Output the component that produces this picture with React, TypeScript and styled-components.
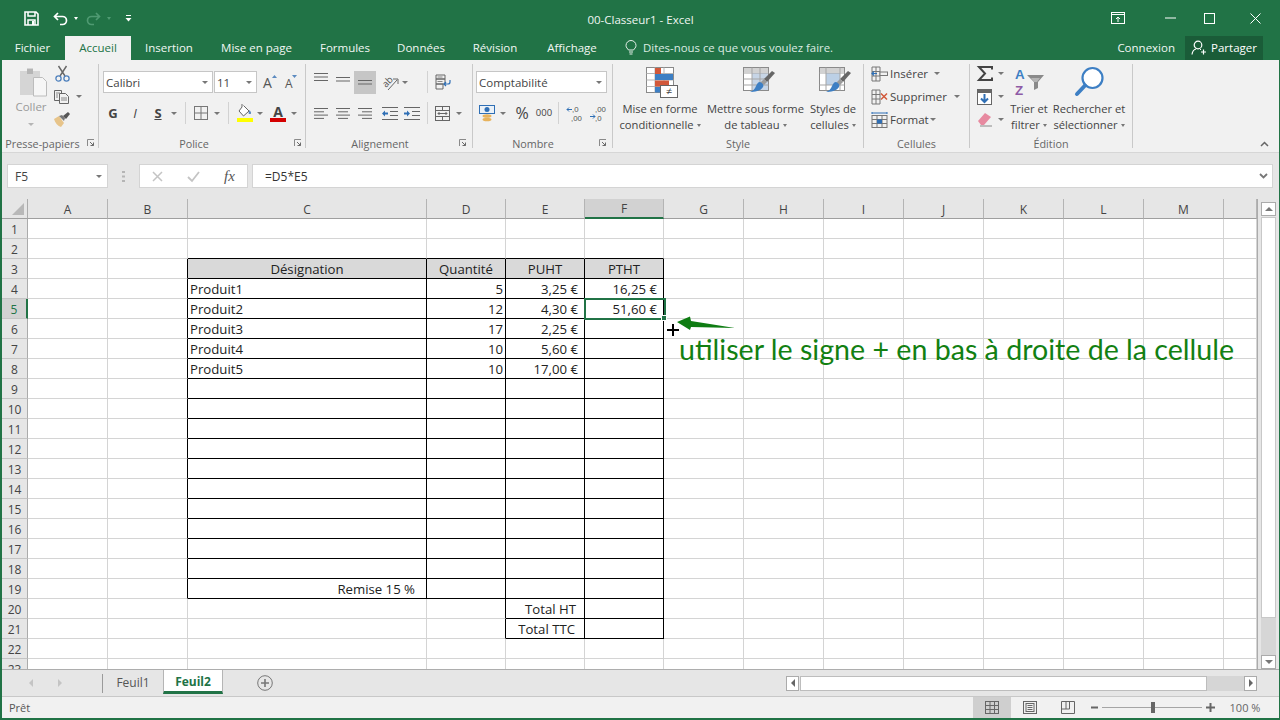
import React from 'react';
import styled, { createGlobalStyle } from 'styled-components';

const UI = `"Open Sans", "Noto Sans", "Liberation Sans", sans-serif`;
const GREEN = '#217346';

const Global = createGlobalStyle`
  html, body { margin: 0; padding: 0; overflow: hidden; background: ${GREEN}; }
  * { box-sizing: border-box; }
  svg { display: block; flex: none; overflow: visible; }
`;

const Window = styled.div`
  width: 1280px; height: 720px; padding: 0 1px 2px 2px; background: ${GREEN};
  display: flex; flex-direction: column; font-family: ${UI}; overflow: hidden;
`;

/* ---------- title bar ---------- */
const TitleBar = styled.div`
  height: 36px; display: flex; align-items: center; position: relative; color: #fff; padding-left: 22px;
`;
const Slot = styled.span<{ $w: number; $ml?: number }>`
  width: ${p => p.$w}px; margin-left: ${p => p.$ml ?? 0}px; flex: none;
  display: flex; align-items: center; justify-content: center;
`;
const WindowTitle = styled.div`
  position: absolute; left: 0; right: 0; top: 11px; text-align: center; font-size: 11.5px; line-height: 17px; color: #f0f6f2; pointer-events: none;
`;
const Spacer = styled.div`flex: 1;`;
const WinCaret = styled.span<{ $dim?: boolean }>`
  width: 0; height: 0; border-left: 2.5px solid transparent; border-right: 2.5px solid transparent;
  border-top: 3px solid ${p => (p.$dim ? '#4f9a72' : '#fff')};
`;

/* ---------- tabs ---------- */
const TabBar = styled.div`height: 24px; display: flex; align-items: stretch; color: #fff;`;
const Tab = styled.div<{ $w: number; $active?: boolean }>`
  width: ${p => p.$w}px; flex: none; display: flex; align-items: center; justify-content: center; padding-bottom: 2px;
  font-size: 11.5px; background: ${p => (p.$active ? '#f1f1f1' : 'transparent')}; color: ${p => (p.$active ? GREEN : '#f2f7f4')};
  &:first-child { padding-right: 2px; }
`;
const TellMe = styled.div`
  margin-left: 13px; display: flex; align-items: center; gap: 6px; padding-bottom: 2px; font-size: 11.4px; color: #dcebe3;
`;
const Connexion = styled.div`
  font-size: 11.5px; display: flex; align-items: center; margin-right: 10px; padding-bottom: 2px; color: #f2f7f4;
`;
const Share = styled.div`
  width: 78px; margin-right: 16px; background: #1a5c38; display: flex; align-items: center; justify-content: center; gap: 4px; padding-bottom: 2px; font-size: 11.5px;
`;

/* ---------- ribbon ---------- */
const Ribbon = styled.div`
  height: 93px; background: #f1f1f1; border-bottom: 1px solid #d6d6d6; display: flex; color: #444; position: relative;
`;
const Group = styled.section<{ $w: number }>`
  width: ${p => p.$w}px; flex: none; display: flex; flex-direction: column;
`;
const GroupBody = styled.div<{ $pl?: number }>`
  height: 76px; display: flex; padding-left: ${p => p.$pl ?? 0}px;
`;
const GroupFoot = styled.div`height: 16px; display: flex; align-items: center; padding-bottom: 2px;`;
const GroupLabel = styled.div<{ $w?: number }>`
  width: ${p => (p.$w ? `${p.$w}px` : '100%')}; text-align: center; font-size: 10.8px; color: #666; white-space: nowrap;
`;
const GroupRule = styled.div`width: 1px; flex: none; margin: 4px 0 4px; background: #c9c9c9;`;
const Launcher = styled.span<{ $ml: number }>`margin-left: ${p => p.$ml}px; display: block;`;
const Collapse = styled.div`position: absolute; right: 10px; bottom: 5px;`;

const TwoRows = styled.div`display: flex; flex-direction: column; padding-top: 11px; gap: 9px;`;
const IconRow = styled.div<{ $pl?: number }>`height: 22px; display: flex; align-items: center; padding-left: ${p => p.$pl ?? 0}px;`;
const Stack = styled.div<{ $w?: number; $ml?: number }>`
  display: flex; flex-direction: column; padding-top: 2px; margin-left: ${p => p.$ml ?? 0}px; ${p => (p.$w ? `width:${p.$w}px;` : '')} flex: none;
`;
const StackRow = styled.div`height: 23px; display: flex; align-items: center;`;
const StackText = styled.span<{ $ml?: number; $w?: number }>`
  font-size: 11.5px; color: #444; margin-left: ${p => p.$ml ?? 0}px; white-space: nowrap; ${p => (p.$w ? `width:${p.$w}px;` : '')}
`;

const Caret = styled.span<{ $light?: boolean }>`
  display: inline-block; width: 0; height: 0; flex: none;
  border-left: 3px solid transparent; border-right: 3px solid transparent; border-top: 3px solid ${p => (p.$light ? '#b5b5b5' : '#777')};
`;
const TinyCaret = styled(Caret)`margin-left: 3px; vertical-align: 2px; border-left-width: 2.5px; border-right-width: 2.5px;`;

const VRule = styled.span<{ $ml: number; $h?: number }>`
  width: 1px; height: ${p => p.$h ?? 22}px; margin-left: ${p => p.$ml}px; background: #d2d2d2; flex: none;
`;
const Combo = styled.div<{ $w: number; $ml?: number }>`
  width: ${p => p.$w}px; height: 22px; margin-left: ${p => p.$ml ?? 0}px; flex: none; background: #fff; border: 1px solid #c6c6c6;
  display: flex; align-items: center; justify-content: space-between; padding: 0 4px 0 2px; font-size: 11.5px; color: #444;
`;
const StyleLetter = styled.span<{ $b?: boolean; $i?: boolean; $u?: boolean }>`
  font-family: ${UI}; font-size: 13px; color: #444;
  font-weight: ${p => (p.$i ? 400 : 700)}; font-style: ${p => (p.$i ? 'italic' : 'normal')};
  text-decoration: ${p => (p.$u ? 'underline' : 'none')};
`;
const Active = styled.span`
  width: 22px; height: 23px; margin-left: 4px; background: #c6c6c6; flex: none; display: flex; align-items: center; justify-content: center;
`;
const NumText = styled.span<{ $big?: boolean }>`
  font-size: ${p => (p.$big ? 16 : 9.5)}px; color: #444; line-height: 1;
`;

const Coller = styled.div`
  width: 34px; margin-left: 12px; padding-top: 7px; display: flex; flex-direction: column; align-items: center; flex: none;
`;
const PasteBox = styled.div`margin-left: 6px;`;
const MutedLabel = styled.div`font-size: 11.5px; color: #9a9a9a; line-height: 16px; margin-top: 2px;`;
const MutedCaret = styled.div`margin-top: 8px; display: flex;`;

const BigButton = styled.div<{ $w: number }>`
  width: ${p => p.$w}px; flex: none; display: flex; flex-direction: column; align-items: center; padding-top: 7px;
`;
const BigIcon = styled.div<{ $ml?: number }>`height: 34px; display: flex; justify-content: center; margin-left: ${p => p.$ml ?? 0}px;`;
const BigText = styled.div`font-size: 11.2px; line-height: 16px; color: #444; white-space: nowrap;`;
const SortBox = styled.div`width: 30px; height: 31px; display: flex; align-items: center;`;
const SortLetters = styled.div`width: 12px; margin-left: 1px; flex: none; display: flex; flex-direction: column;`;
const SortLetter = styled.span<{ $c: string }>`
  display: block; height: 15.5px; line-height: 15.5px; font-family: "Liberation Sans", sans-serif; font-size: 13.4px; font-weight: 700; color: ${p => p.$c};
`;

/* ---------- formula bar ---------- */
const FormulaBar = styled.div`
  height: 46px; background: #e6e6e6; display: flex; padding: 11px 6px 11px 5px; align-items: stretch;
`;
const NameBox = styled.div`
  width: 101px; background: #fff; border: 1px solid #d4d4d4; display: flex; align-items: center; justify-content: space-between;
  padding: 0 5px 0 7px; font-size: 12px; color: #444;
`;
const Grip = styled.div`width: 31px; display: flex; align-items: center; justify-content: center;`;
const FxBox = styled.div`
  width: 109px; background: #fff; border: 1px solid #d4d4d4; display: flex; align-items: center; padding-left: 12px;
`;
const FormulaInput = styled.div`
  flex: 1; margin-left: 4px; background: #fff; border: 1px solid #d4d4d4; display: flex; align-items: center; justify-content: space-between;
  padding: 0 4px 0 12px; font-size: 12px; color: #333;
`;
const FxMark = styled.span`
  font-family: "Liberation Serif", serif; font-style: italic; font-size: 15px; color: #555; margin-left: 24px;
`;

/* ---------- sheet ---------- */
const SheetArea = styled.div`height: 470px; display: flex; background: #e6e6e6;`;
const Sheet = styled.div`
  position: relative; width: 1256px; height: 470px; overflow: hidden; background: #fff; border-right: 1px solid #ababab;
  display: grid; grid-template-columns: 26px 80px 80px 239px 79px 79px 79px 80px 80px 80px 80px 80px 80px 80px 33px; grid-auto-rows: 20px;
`;
const Corner = styled.div`
  background: #e6e6e6; border-right: 1px solid #ababab; border-bottom: 1px solid #9f9f9f; display: flex; align-items: flex-end; justify-content: flex-end; padding: 0 3px 3px 0;
`;
const ColHead = styled.div<{ $on?: boolean }>`
  background: ${p => (p.$on ? '#d2d2d2' : '#e6e6e6')}; border-right: 1px solid #b4b4b4;
  border-bottom: ${p => (p.$on ? `2px solid ${GREEN}` : '1px solid #9f9f9f')};
  display: flex; align-items: center; justify-content: center; padding-top: 1px; font-size: 12px; color: #444;
`;
const RowHead = styled.div<{ $on?: boolean }>`
  background: ${p => (p.$on ? '#d2d2d2' : '#e6e6e6')};
  color: ${p => (p.$on ? GREEN : '#444')};
  border-right: ${p => (p.$on ? `2px solid ${GREEN}` : '1px solid #ababab')}; border-bottom: 1px solid #c4c4c4;
  display: flex; align-items: center; justify-content: center; font-size: 12px; padding-top: 1px;
`;
const Cell = styled.div<{ $right: boolean; $bottom: boolean; $fill?: boolean; $align: string; $pr: number }>`
  background: ${p => (p.$fill ? '#d9d9d9' : '#fff')};
  border-right: 1px solid ${p => (p.$right ? '#000' : '#d4d4d4')};
  border-bottom: 1px solid ${p => (p.$bottom ? '#000' : '#d4d4d4')};
  display: flex; align-items: center; justify-content: ${p => p.$align}; padding: 1px ${p => p.$pr}px 0 2px;
  font-size: 13.2px; color: #222; white-space: nowrap;
`;
const Selection = styled.div`
  position: absolute; left: 582px; top: 99px; width: 82px; height: 22px; border: 2px solid ${GREEN}; pointer-events: none;
`;
const Handle = styled.div`
  position: absolute; right: -3px; bottom: -3px; width: 6px; height: 6px; background: ${GREEN}; border: 1px solid #fff;
`;
const Note = styled.div`
  position: absolute; left: 677px; top: 132px; font-family: Lato, "Open Sans", sans-serif; font-size: 28.6px; line-height: 36px; color: #128012; white-space: nowrap;
`;
const ArrowMark = styled.div`position: absolute; left: 662px; top: 117px;`;

const VScroll = styled.div`width: 21px; padding: 3px 3px 0 3px; display: flex; flex-direction: column; align-items: stretch;`;
const ScrollBtn = styled.div`
  height: 14px; background: #fff; border: 1px solid #ababab; display: flex; align-items: center; justify-content: center; flex: none;
`;
const VThumb = styled.div`height: 402px; margin-top: 1px; background: #fff; border: 1px solid #c8c8c8;`;
const VTrack = styled.div`height: 37px; background: #d6d6d6;`;

/* ---------- sheet tabs ---------- */
const TabsRow = styled.div`
  height: 28px; background: #e6e6e6; border-top: 1px solid #adadad; border-bottom: 1px solid #c8c8c8; display: flex; align-items: center; position: relative;
`;
const NavTriangle = styled.span<{ $dir: 'l' | 'r'; $ml: number }>`
  width: 0; height: 0; flex: none; margin-left: ${p => p.$ml}px;
  border-top: 4px solid transparent; border-bottom: 4px solid transparent;
  ${p => (p.$dir === 'l' ? 'border-right: 4px solid #c4c4c4;' : 'border-left: 4px solid #c4c4c4;')}
`;
const TabRule = styled.span`width: 1px; height: 19px; margin-left: 40px; background: #9a9a9a; flex: none;`;
const SheetTab = styled.div<{ $on?: boolean }>`
  width: 60px; flex: none; align-self: flex-start; height: 24px; display: flex; align-items: center; justify-content: center; font-size: 12px;
  ${p =>
    p.$on
      ? `background:#fff;color:${GREEN};font-weight:700;padding-top:1px;border-bottom:3px solid ${GREEN};border-left:1px solid #b5b5b5;border-right:1px solid #b5b5b5;`
      : 'color:#555;'}
`;
const AddSheet = styled.span`margin-left: 34px; flex: none;`;
const HScroll = styled.div`margin-left: auto; display: flex; align-items: center; height: 15px; margin-right: 22px; width: 471px;`;
const HBtn = styled.div`
  width: 13px; height: 15px; background: #fff; border: 1px solid #ababab; display: flex; align-items: center; justify-content: center; flex: none;
`;
const HThumb = styled.div`width: 407px; height: 15px; margin-left: 1px; background: #fff; border: 1px solid #bdbdbd; flex: none;`;
const HTrack = styled.div`flex: 1; height: 15px; background: #d6d6d6;`;
const BtnTriangle = styled.span<{ $dir: 'l' | 'r' }>`
  width: 0; height: 0; border-top: 4px solid transparent; border-bottom: 4px solid transparent;
  ${p => (p.$dir === 'l' ? 'border-right: 4px solid #666;' : 'border-left: 4px solid #666;')}
`;
const UpDown = styled.span<{ $up?: boolean }>`
  width: 0; height: 0; border-left: 4px solid transparent; border-right: 4px solid transparent;
  ${p => (p.$up ? 'border-bottom: 4px solid #777;' : 'border-top: 4px solid #777;')}
`;

/* ---------- status ---------- */
const StatusBar = styled.div`height: 21px; background: #f1f1f1; display: flex; align-items: center; padding-left: 7px; font-size: 11px; color: #555;`;
const ViewBtn = styled.div<{ $on?: boolean }>`
  width: 38px; height: 21px; flex: none; display: flex; align-items: center; justify-content: center; background: ${p => (p.$on ? '#cfcfcf' : 'transparent')};
`;
const ZoomSlider = styled.div`
  width: 100px; height: 1px; background: #a5a5a5; margin-left: 4px; position: relative; flex: none;
`;
const ZoomThumb = styled.div`position: absolute; left: 49px; top: -5px; width: 4px; height: 11px; background: #666;`;
const ZoomPct = styled.div`width: 48px; margin: 0 10px 0 6px; font-size: 11px; color: #666; flex: none; text-align: center;`;

/* ---------- icons ---------- */
const SaveIcon = () => (
  <svg width="15" height="15" viewBox="0 0 15 15"><path d="M1 1h11l2 2v11H1z" fill="none" stroke="#fff" strokeWidth="1.6" /><path d="M4 1v4h7V1M4 14V9h7v5" fill="none" stroke="#fff" strokeWidth="1.5" /><rect x="8" y="10" width="2" height="4" fill="#fff" /></svg>
);
const UndoIcon = ({ dim }: { dim?: boolean }) => (
  <svg width="15" height="13" viewBox="0 0 15 13" style={dim ? { transform: 'scaleX(-1)' } : undefined}>
    <path d="M5 1 1.5 4.5 5 8M2 4.5h7.5a4 4 0 0 1 0 8H7" fill="none" stroke={dim ? '#4f9a72' : '#fff'} strokeWidth="1.7" />
  </svg>
);
const QatIcon = () => (
  <svg width="7" height="7" viewBox="0 0 7 7"><path d="M1 0.5h5" stroke="#fff" strokeWidth="1" /><path d="M0.5 3h6L3.5 6.5z" fill="#fff" /></svg>
);
const RibbonOptIcon = () => (
  <svg width="14" height="12" viewBox="0 0 14 12"><rect x=".5" y=".5" width="13" height="11" fill="none" stroke="#fff" /><path d="M.5 2.5h13" stroke="#fff" /><path d="M7 10V5M5 7l2-2 2 2" fill="none" stroke="#fff" /></svg>
);
const MinIcon = () => <svg width="11" height="2" viewBox="0 0 11 2"><path d="M0 1h11" stroke="#fff" /></svg>;
const MaxIcon = () => <svg width="11" height="11" viewBox="0 0 11 11"><rect x=".5" y=".5" width="10" height="10" fill="none" stroke="#fff" /></svg>;
const CloseIcon = () => <svg width="11" height="11" viewBox="0 0 11 11"><path d="M.5.5l10 10M10.5.5l-10 10" stroke="#fff" /></svg>;
const BulbIcon = () => (
  <svg width="12" height="15" viewBox="0 0 12 15"><path d="M3.5 10C2.5 8.5 1 7.6 1 5.5a5 5 0 0 1 10 0C11 7.6 9.5 8.5 8.5 10z" fill="none" stroke="#e6f0ea" /><path d="M4 12h4M4.5 14h3" stroke="#e6f0ea" /></svg>
);
const PersonIcon = () => (
  <svg width="16" height="15" viewBox="0 0 16 15"><circle cx="7" cy="5" r="3.8" fill="none" stroke="#fff" strokeWidth="1.2" /><path d="M1 14.5c.4-3 2-5 4-5.5M9 9.5h1" fill="none" stroke="#fff" strokeWidth="1.2" /><path d="M12.5 9.5v5M10 12h5" stroke="#fff" strokeWidth="1.2" /></svg>
);
const LaunchIcon = () => (
  <svg width="8" height="8" viewBox="0 0 8 8"><path d="M.5 7V.5H7" fill="none" stroke="#8a8a8a" /><path d="M3 3l3.5 3.5M6.5 3.5v3h-3" fill="none" stroke="#6a6a6a" /></svg>
);
const ChevUp = () => <svg width="9" height="6" viewBox="0 0 9 6"><path d="M1 5l3.5-3.5L8 5" fill="none" stroke="#666" strokeWidth="1.5" /></svg>;
const ChevDown = () => <svg width="9" height="6" viewBox="0 0 9 6"><path d="M1 1l3.5 3.5L8 1" fill="none" stroke="#777" strokeWidth="1.8" /></svg>;

const PasteIcon = () => (
  <svg width="28" height="30" viewBox="0 0 28 30">
    <path d="M0 4h7V1h6v3h7v24H0z" fill="#d5d5d5" />
    <rect x="7" y="2" width="6" height="5" fill="#b5b5b5" />
    <path d="M13.5 10.5h9l4 4v14.5h-13z" fill="#f6f6f6" stroke="#bcbcbc" />
  </svg>
);
const ScissorsIcon = () => (
  <svg width="15" height="16" viewBox="0 0 15 16">
    <path d="M3.5 0l6.5 10M11.5 0L5 10" stroke="#666" strokeWidth="1.4" fill="none" />
    <circle cx="3.5" cy="12.5" r="2.6" fill="none" stroke="#4f81bd" strokeWidth="1.3" />
    <circle cx="11.5" cy="12.5" r="2.6" fill="none" stroke="#4f81bd" strokeWidth="1.3" />
  </svg>
);
const CopyIcon = () => (
  <svg width="15" height="14" viewBox="0 0 15 14" fill="none" stroke="#666">
    <path d="M.5.5h7v10h-7z" /><path d="M5.5 3.5h6l3 3v7h-9z" fill="#f1f1f1" />
    <path d="M2 3h4M2 5h2M2 7h2M7 8h6M7 10h6" stroke="#888" />
  </svg>
);
const BrushIcon = () => (
  <svg width="16" height="15" viewBox="0 0 16 15">
    <path d="M0 7l5-3 5 7-3 4C4 14 1 11 0 7z" fill="#e7c48a" />
    <path d="M5 4l3-1 3 3-1 3z" fill="#777" />
    <path d="M9 4l5-4 2 2-4 5z" fill="#555" />
  </svg>
);
const GrowA = ({ up }: { up?: boolean }) => (
  <svg width={up ? 15 : 13} height="14" viewBox={up ? '0 0 15 14' : '0 0 13 14'}>
    <text x="0" y="13" fontFamily={UI} fontSize={up ? 14 : 12} fill="#555">A</text>
    <path d={up ? 'M9 3l2.5-3L14 3z' : 'M7 0h5L9.5 3z'} fill="#5b8ac0" />
  </svg>
);
const BordersIcon = () => (
  <svg width="14" height="14" viewBox="0 0 14 14" fill="none" stroke="#777"><rect x=".5" y=".5" width="13" height="13" /><path d="M7 .5v13M.5 7h13" /></svg>
);
const FillIcon = () => (
  <svg width="16" height="18" viewBox="0 0 16 18">
    <path d="M5 0v3L2 7l4.5 5L12 7 6.5 1.5" fill="#fff" stroke="#666" />
    <path d="M12.5 6c1 1.5 2 2.5 1.5 3.5s-2.5.5-2.500-.5z" fill="#5b8ac0" />
    <rect x="0" y="14" width="16" height="4" fill="#ffff00" />
  </svg>
);
const FontColorIcon = () => (
  <svg width="16" height="18" viewBox="0 0 16 18">
    <text x="8" y="12.5" textAnchor="middle" fontFamily={UI} fontWeight="700" fontSize="14" fill="#444">A</text>
    <rect x="0" y="14" width="16" height="4" fill="#d40000" />
  </svg>
);
const Lines = ({ kind }: { kind: 'l' | 'c' | 'r' }) => {
  const x = (w: number) => (kind === 'l' ? 0 : kind === 'c' ? (14 - w) / 2 : 14 - w);
  const ws = [14, 10, 14, 10];
  return (
    <svg width="14" height="11" viewBox="0 0 14 11">
      {ws.map((w, i) => <rect key={i} x={x(w)} y={i * 3.3} width={w} height="1" fill="#666" />)}
    </svg>
  );
};
const VAlign = ({ n, y }: { n: number; y: number }) => (
  <svg width="14" height="14" viewBox="0 0 14 14" style={{ transform: `translateY(${y}px)` }}>
    {Array.from({ length: n }).map((_, i) => <rect key={i} x="0" y={i * 3.5} width="14" height="1" fill="#666" />)}
  </svg>
);
const OrientIcon = () => (
  <svg width="16" height="17" viewBox="0 0 16 17">
    <text x="0" y="11" fontFamily={UI} fontSize="9.5" fill="#555" transform="rotate(-45 5 9)">ab</text>
    <path d="M5 16L14 6M10 5h5v5" fill="none" stroke="#666" />
  </svg>
);
const IndentIcon = ({ out }: { out?: boolean }) => (
  <svg width="16" height="13" viewBox="0 0 16 13">
    {[0, 12].map(y => <rect key={y} x="0" y={y} width="16" height="1" fill="#666" />)}
    {[4, 8].map(y => <rect key={y} x="8" y={y} width="8" height="1" fill="#666" />)}
    <path d={out ? 'M0 6.5l3-3v2h3v2H3v2z' : 'M6 6.5l-3-3v2H0v2h3v2z'} fill="#2f6fb5" />
  </svg>
);
const WrapIcon = () => (
  <svg width="16" height="16" viewBox="0 0 16 16" fill="none" stroke="#666">
    <path d="M1 1h9v4H1zM1 5h9v5H1zM1 10h7v5H1z" />
    <path d="M2.5 3h5M2.5 7.5h5" stroke="#888" />
    <path d="M15 6v2a2 2 0 0 1-2 2H9M11 8l-2 2 2 2" stroke="#2f6fb5" strokeWidth="1.2" />
  </svg>
);
const MergeIcon = () => (
  <svg width="15" height="15" viewBox="0 0 15 15" fill="none" stroke="#666">
    <rect x=".5" y=".5" width="14" height="14" /><path d="M.5 4.5h14M.5 10.5h14M7.5.5v4M7.5 10.5v4" />
    <path d="M3 7.5h9M4.5 6L3 7.5 4.5 9M10.5 6L12 7.5 10.5 9" />
  </svg>
);
const MoneyIcon = () => (
  <svg width="16" height="17" viewBox="0 0 16 17">
    <rect x=".5" y=".5" width="15" height="8" fill="#eaf1f8" stroke="#2f6fb5" />
    <circle cx="8" cy="4.5" r="2.5" fill="#2f6fb5" />
    <ellipse cx="8" cy="11" rx="4.5" ry="1.8" fill="#e8b35c" />
    <ellipse cx="8" cy="14.5" rx="4.5" ry="1.8" fill="#e8b35c" />
  </svg>
);
const DecIcon = ({ inc }: { inc?: boolean }) => (
  <svg width="15" height="15" viewBox="0 0 15 15">
    <text x="5" y="6" fontFamily={'"Liberation Sans", sans-serif'} fontSize="7.8" fill="#555">{inc ? ',00' : ',0'}</text>
    <text x={inc ? 5 : 4} y="15" fontFamily={'"Liberation Sans", sans-serif'} fontSize="7.8" fill="#555">{inc ? ',0' : ',00'}</text>
    <path d={inc ? 'M0 10.5h5M3 8.5l2 2-2 2' : 'M5 3.5H0M2 1.5l-2 2 2 2'} fill="none" stroke="#2f6fb5" />
  </svg>
);
const CondFmtIcon = () => (
  <svg width="32" height="31" viewBox="0 0 32 31">
    <rect x=".5" y=".5" width="27" height="25" fill="#fff" stroke="#8a8a8a" />
    <path d="M9 .5v25M18 .5v25M.5 6.5h27M.5 13h27M.5 19.5h27" stroke="#b5b5b5" />
    <rect x="9" y="1" width="6" height="6" fill="#d2583a" />
    <rect x="9" y="7" width="18" height="6" fill="#3d7fc4" />
    <rect x="9" y="13.5" width="14" height="6" fill="#d2583a" />
    <rect x="9" y="20" width="6" height="5.5" fill="#3d7fc4" />
    <rect x="14.5" y="18.5" width="17" height="12" fill="#fff" stroke="#666" />
    <text x="23" y="28" textAnchor="middle" fontFamily={UI} fontSize="11" fill="#444">≠</text>
  </svg>
);
const TableStyleIcon = ({ block }: { block?: boolean }) => (
  <svg width="33" height="31" viewBox="0 0 33 31">
    <rect x=".5" y=".5" width="25" height="23" fill="#fff" stroke="#8a8a8a" />
    <rect x="1" y="1" width="24" height="4" fill="#d2d2d2" />
    {block ? <rect x="7" y="6" width="14" height="12" fill="#bcd0e6" /> : <rect x="9" y="6" width="16" height="17" fill="#c7d5e6" />}
    {!block && <path d="M9 .5v23M17 .5v23M.5 6h25M.5 12h25M.5 18h25" stroke="#a5a5a5" />}
    {block && <path d="M7 .5v23M.5 6h25M.5 18h25M21 .5v23" stroke="#a5a5a5" />}
    <path d="M32 6l-8 9-3-3 8-8z" fill="#666" />
    <path d="M21 12l3 3-3 3-4-2z" fill="#9a9a9a" />
    <path d="M17 15c3 1 4 3 3 5-2 4-9 5-13 5 3-1 5-3 6-6 1-2 2-4 4-4z" fill="#3d7fc4" />
  </svg>
);
const InsertIcon = () => (
  <svg width="17" height="16" viewBox="0 0 17 16" fill="none" stroke="#777">
    <path d="M1 1h8v14H1zM1 5.5h8M1 10h8M5 1v14" /><rect x="9" y="6" width="7.5" height="3.5" fill="#f1f1f1" />
    <path d="M6 7.5H1M3 5.5l-2 2 2 2" stroke="#2f6fb5" strokeWidth="1.2" />
  </svg>
);
const DeleteIcon = () => (
  <svg width="17" height="16" viewBox="0 0 17 16" fill="none" stroke="#777">
    <path d="M1 1h8v14H1zM1 5.5h8M1 10h8M5 1v14" />
    <path d="M10 4.5l6 6M16 4.5l-6 6" stroke="#d2583a" strokeWidth="1.5" />
  </svg>
);
const FormatIcon = () => (
  <svg width="17" height="16" viewBox="0 0 17 16" fill="none" stroke="#777">
    <path d="M1 0v2M16 0v2M1 1h15" stroke="#2f6fb5" />
    <rect x="1" y="3.5" width="15" height="12" /><path d="M1 7.5h15M1 11.5h15M6 3.5v12M11 3.5v12" />
    <rect x="6" y="7.5" width="5" height="4" fill="#2f6fb5" stroke="none" />
  </svg>
);
const SigmaIcon = () => (
  <svg width="16" height="15" viewBox="0 0 16 15"><path d="M15 3.5V1H2l6 6.5L2 14h13v-2.5" fill="none" stroke="#444" strokeWidth="2" /></svg>
);
const FillDownIcon = () => (
  <svg width="15" height="16" viewBox="0 0 15 16">
    <rect x=".5" y=".5" width="14" height="15" fill="#fff" stroke="#666" /><rect x="1" y="1" width="13" height="3" fill="#666" />
    <path d="M7.5 5v8M4 9.5L7.5 13 11 9.5" fill="none" stroke="#2f6fb5" strokeWidth="2" />
  </svg>
);
const EraserIcon = () => (
  <svg width="16" height="15" viewBox="0 0 16 15">
    <path d="M1 9l7-8 6 4-7 8H4z" fill="#e78aa0" />
    <path d="M3 14h12" stroke="#888" />
  </svg>
);
const FunnelIcon = () => (
  <svg width="17" height="15" viewBox="0 0 17 15">
    <path d="M0 0h17l-6 7v6l-4 2V7z" fill="#8a8a8a" />
    <path d="M4 3h9l-3 4H7z" fill="#b5b5b5" />
  </svg>
);
const FindIcon = () => (
  <svg width="30" height="30" viewBox="0 0 30 30">
    <circle cx="18.5" cy="11" r="10" fill="#fff" stroke="#3d7fc4" strokeWidth="2.2" />
    <path d="M11 18.5L3 27" stroke="#3d7fc4" strokeWidth="4" strokeLinecap="round" />
  </svg>
);
const GripDots = () => (
  <svg width="3" height="11" viewBox="0 0 3 11"><path d="M0 0h3v2H0zM0 4.5h3v2H0zM0 9h3v2H0z" fill="#b5b5b5" /></svg>
);
const FxCross = () => <svg width="11" height="11" viewBox="0 0 11 11"><path d="M1 1l9 9M10 1l-9 9" stroke="#c4c4c4" strokeWidth="1.5" /></svg>;
const FxCheck = () => <svg width="13" height="11" viewBox="0 0 13 11"><path d="M1 6l4 4 7-9" fill="none" stroke="#c4c4c4" strokeWidth="1.8" /></svg>;
const CornerMark = () => <svg width="12" height="12" viewBox="0 0 12 12"><path d="M12 0v12H0z" fill="#b8b8b8" /></svg>;
const Arrow = () => (
  <svg width="72" height="24" viewBox="0 0 72 24">
    <path d="M13 6L26 .6 27 5 71 12 27 11 26 14z" fill="#0e7c12" />
    <path d="M9 8v12M3 14h12" stroke="#000" strokeWidth="2" />
  </svg>
);
const AddCircle = () => (
  <svg width="16" height="16" viewBox="0 0 16 16"><circle cx="8" cy="8" r="7.3" fill="none" stroke="#777" /><path d="M8 4v8M4 8h8" stroke="#777" strokeWidth="1.6" /></svg>
);
const NormalView = () => (
  <svg width="14" height="13" viewBox="0 0 14 13" fill="none" stroke="#666"><rect x=".5" y=".5" width="13" height="12" /><path d="M5 .5v12M9.5.5v12M.5 4.5h13M.5 8.5h13" /></svg>
);
const PageView = () => (
  <svg width="14" height="13" viewBox="0 0 14 13" fill="none" stroke="#666"><rect x=".5" y=".5" width="13" height="12" /><rect x="3" y="2.5" width="8" height="8" /><path d="M4.5 4.5h5M4.5 6.5h5M4.5 8.5h5" /></svg>
);
const BreakView = () => (
  <svg width="14" height="13" viewBox="0 0 14 13" fill="none" stroke="#666"><path d="M.5.5h13v12h-13zM.5 8h8V.5M5 .5V8" /></svg>
);
const ZoomMinus = () => <svg width="7" height="3" viewBox="0 0 7 3"><rect width="7" height="2" y=".5" fill="#666" /></svg>;
const ZoomPlus = () => <svg width="9" height="9" viewBox="0 0 9 9"><path d="M0 4.5h9M4.5 0v9" stroke="#666" strokeWidth="2" /></svg>;

/* ---------- data ---------- */
const COLS = 'ABCDEFGHIJKLMN'.split('');
const ROWS = Array.from({ length: 23 }, (_, i) => i + 1);
type CellData = { t: string; align?: string; pr?: number };
const center = (t: string): CellData => ({ t, align: 'center', pr: 2 });
const money = (t: string): CellData => ({ t, align: 'flex-end', pr: 6 });
const qty = (t: string): CellData => ({ t, align: 'flex-end', pr: 2 });
const DATA: Record<string, CellData> = {
  C3: center('Désignation'), D3: center('Quantité'), E3: center('PUHT'), F3: center('PTHT'),
  C4: { t: 'Produit1' }, D4: qty('5'), E4: money('3,25 €'), F4: money('16,25 €'),
  C5: { t: 'Produit2' }, D5: qty('12'), E5: money('4,30 €'), F5: money('51,60 €'),
  C6: { t: 'Produit3' }, D6: qty('17'), E6: money('2,25 €'),
  C7: { t: 'Produit4' }, D7: qty('10'), E7: money('5,60 €'),
  C8: { t: 'Produit5' }, D8: qty('10'), E8: money('17,00 €'),
  C19: { t: 'Remise 15 %', align: 'flex-end', pr: 11 },
  E20: { t: 'Total HT', align: 'flex-end', pr: 8 }, E21: { t: 'Total TTC', align: 'flex-end', pr: 9 },
};
const boxed = (r: number, c: number) => {
  const n = COLS[c];
  if (r >= 3 && r <= 19) return ['C', 'D', 'E', 'F'].includes(n);
  if (r === 20 || r === 21) return n === 'E' || n === 'F';
  return false;
};

const TABS: [string, number][] = [['Insertion', 76], ['Mise en page', 99], ['Formules', 78], ['Données', 74], ['Révision', 74], ['Affichage', 80]];

export default function App() {
  return (
    <Window>
      <Global />
      <TitleBar>
        <SaveIcon />
        <Slot $w={15} $ml={14}><UndoIcon /></Slot>
        <Slot $w={6} $ml={5}><WinCaret /></Slot>
        <Slot $w={15} $ml={7}><UndoIcon dim /></Slot>
        <Slot $w={6} $ml={5}><WinCaret $dim /></Slot>
        <Slot $w={7} $ml={13}><QatIcon /></Slot>
        <WindowTitle>00-Classeur1 - Excel</WindowTitle>
        <Spacer />
        <Slot $w={14} $ml={0}><RibbonOptIcon /></Slot>
        <Slot $w={11} $ml={40}><MinIcon /></Slot>
        <Slot $w={11} $ml={28}><MaxIcon /></Slot>
        <Slot $w={11} $ml={35}><CloseIcon /></Slot>
        <Slot $w={18} />
      </TitleBar>

      <TabBar>
        <Tab $w={63}>Fichier</Tab>
        <Tab $w={66} $active>Accueil</Tab>
        {TABS.map(([t, w]) => <Tab key={t} $w={w}>{t}</Tab>)}
        <TellMe><BulbIcon />Dites-nous ce que vous voulez faire.</TellMe>
        <Spacer />
        <Connexion>Connexion</Connexion>
        <Share><PersonIcon />Partager</Share>
      </TabBar>

      <Ribbon>
        <Group $w={96}>
          <GroupBody>
            <Coller>
              <PasteBox><PasteIcon /></PasteBox>
              <MutedLabel>Coller</MutedLabel>
              <MutedCaret><Caret $light /></MutedCaret>
            </Coller>
            <Stack $ml={6}>
              <StackRow><Slot $w={15} $ml={1}><ScissorsIcon /></Slot></StackRow>
              <StackRow><Slot $w={15}><CopyIcon /></Slot><Slot $w={8} $ml={6}><Caret /></Slot></StackRow>
              <StackRow><Slot $w={16}><BrushIcon /></Slot></StackRow>
            </Stack>
          </GroupBody>
          <GroupFoot><GroupLabel $w={81}>Presse-papiers</GroupLabel><Launcher $ml={4}><LaunchIcon /></Launcher></GroupFoot>
        </Group>
        <GroupRule />

        <Group $w={206}>
          <GroupBody $pl={4}>
            <TwoRows>
              <IconRow>
                <Combo $w={110}>Calibri<Caret /></Combo>
                <Combo $w={43} $ml={1}>11<Caret /></Combo>
                <Slot $w={15} $ml={6}><GrowA up /></Slot>
                <Slot $w={13} $ml={7}><GrowA /></Slot>
              </IconRow>
              <IconRow>
                <Slot $w={20}><StyleLetter>G</StyleLetter></Slot>
                <Slot $w={18} $ml={3}><StyleLetter $i>I</StyleLetter></Slot>
                <Slot $w={18} $ml={5}><StyleLetter $u>S</StyleLetter></Slot>
                <Slot $w={8} $ml={3}><Caret /></Slot>
                <VRule $ml={7} />
                <Slot $w={14} $ml={8}><BordersIcon /></Slot>
                <Slot $w={8} $ml={5}><Caret /></Slot>
                <VRule $ml={7} />
                <Slot $w={16} $ml={8}><FillIcon /></Slot>
                <Slot $w={8} $ml={3}><Caret /></Slot>
                <Slot $w={16} $ml={6}><FontColorIcon /></Slot>
                <Slot $w={8} $ml={4}><Caret /></Slot>
              </IconRow>
            </TwoRows>
          </GroupBody>
          <GroupFoot><GroupLabel $w={190}>Police</GroupLabel><Launcher $ml={5}><LaunchIcon /></Launcher></GroupFoot>
        </Group>
        <GroupRule />

        <Group $w={166}>
          <GroupBody $pl={8}>
            <TwoRows>
              <IconRow>
                <Slot $w={14}><VAlign n={3} y={-2} /></Slot>
                <Slot $w={14} $ml={8}><VAlign n={2} y={2} /></Slot>
                <Active><VAlign n={2} y={5} /></Active>
                <Slot $w={16} $ml={7}><OrientIcon /></Slot>
                <Slot $w={8} $ml={2}><Caret /></Slot>
                <VRule $ml={18} />
                <Slot $w={16} $ml={7}><WrapIcon /></Slot>
              </IconRow>
              <IconRow>
                <Slot $w={14}><Lines kind="l" /></Slot>
                <Slot $w={14} $ml={8}><Lines kind="c" /></Slot>
                <Slot $w={14} $ml={8}><Lines kind="r" /></Slot>
                <Slot $w={16} $ml={10}><IndentIcon out /></Slot>
                <Slot $w={16} $ml={6}><IndentIcon /></Slot>
                <VRule $ml={7} />
                <Slot $w={15} $ml={7}><MergeIcon /></Slot>
                <Slot $w={8} $ml={5}><Caret /></Slot>
              </IconRow>
            </TwoRows>
          </GroupBody>
          <GroupFoot><GroupLabel $w={148}>Alignement</GroupLabel><Launcher $ml={5}><LaunchIcon /></Launcher></GroupFoot>
        </Group>
        <GroupRule />

        <Group $w={139}>
          <GroupBody $pl={3}>
            <TwoRows>
              <IconRow><Combo $w={131}>Comptabilité<Caret /></Combo></IconRow>
              <IconRow>
                <Slot $w={16} $ml={3}><MoneyIcon /></Slot>
                <Slot $w={8} $ml={4}><Caret /></Slot>
                <Slot $w={14} $ml={8}><NumText $big>%</NumText></Slot>
                <Slot $w={14} $ml={8}><NumText>000</NumText></Slot>
                <VRule $ml={7} />
                <Slot $w={15} $ml={8}><DecIcon /></Slot>
                <Slot $w={15} $ml={8}><DecIcon inc /></Slot>
              </IconRow>
            </TwoRows>
          </GroupBody>
          <GroupFoot><GroupLabel $w={120}>Nombre</GroupLabel><Launcher $ml={6}><LaunchIcon /></Launcher></GroupFoot>
        </Group>
        <GroupRule />

        <Group $w={250}>
          <GroupBody>
            <BigButton $w={94}>
              <BigIcon $ml={4}><CondFmtIcon /></BigIcon>
              <BigText>Mise en forme</BigText>
              <BigText>conditionnelle<TinyCaret /></BigText>
            </BigButton>
            <BigButton $w={97}>
              <BigIcon $ml={7}><TableStyleIcon /></BigIcon>
              <BigText>Mettre sous forme</BigText>
              <BigText>de tableau<TinyCaret /></BigText>
            </BigButton>
            <BigButton $w={58}>
              <BigIcon $ml={4}><TableStyleIcon block /></BigIcon>
              <BigText>Styles de</BigText>
              <BigText>cellules<TinyCaret /></BigText>
            </BigButton>
          </GroupBody>
          <GroupFoot><GroupLabel>Style</GroupLabel></GroupFoot>
        </Group>
        <GroupRule />

        <Group $w={105}>
          <GroupBody $pl={7}>
            <Stack>
              <StackRow><InsertIcon /><StackText $ml={2} $w={44}>Insérer</StackText><Caret /></StackRow>
              <StackRow><DeleteIcon /><StackText $ml={2} $w={64}>Supprimer</StackText><Caret /></StackRow>
              <StackRow><FormatIcon /><StackText $ml={2} $w={40}>Format</StackText><Caret /></StackRow>
            </Stack>
          </GroupBody>
          <GroupFoot><GroupLabel>Cellules</GroupLabel></GroupFoot>
        </Group>
        <GroupRule />

        <Group $w={162}>
          <GroupBody $pl={7}>
            <Stack $w={28}>
              <StackRow><SigmaIcon /><Slot $w={6} $ml={5}><Caret /></Slot></StackRow>
              <StackRow><FillDownIcon /><Slot $w={6} $ml={6}><Caret /></Slot></StackRow>
              <StackRow><EraserIcon /><Slot $w={6} $ml={5}><Caret /></Slot></StackRow>
            </Stack>
            <BigButton $w={48}>
              <BigIcon>
                <SortBox>
                  <SortLetters><SortLetter $c="#3d7fc4">A</SortLetter><SortLetter $c="#8e5ba6">Z</SortLetter></SortLetters>
                  <FunnelIcon />
                </SortBox>
              </BigIcon>
              <BigText>Trier et</BigText>
              <BigText>filtrer<TinyCaret /></BigText>
            </BigButton>
            <BigButton $w={72}>
              <BigIcon><FindIcon /></BigIcon>
              <BigText>Rechercher et</BigText>
              <BigText>sélectionner<TinyCaret /></BigText>
            </BigButton>
          </GroupBody>
          <GroupFoot><GroupLabel>Édition</GroupLabel></GroupFoot>
        </Group>
        <GroupRule />
        <Collapse><ChevUp /></Collapse>
      </Ribbon>

      <FormulaBar>
        <NameBox>F5<Caret /></NameBox>
        <Grip><GripDots /></Grip>
        <FxBox><FxCross /><Slot $w={13} $ml={24}><FxCheck /></Slot><FxMark>fx</FxMark></FxBox>
        <FormulaInput>=D5*E5<ChevDown /></FormulaInput>
      </FormulaBar>

      <SheetArea>
        <Sheet>
          <Corner><CornerMark /></Corner>
          {COLS.map(c => <ColHead key={c} $on={c === 'F'}>{c === 'N' ? '' : c}</ColHead>)}
          {ROWS.map(r => (
            <React.Fragment key={r}>
              <RowHead $on={r === 5}>{r}</RowHead>
              {COLS.map((c, i) => {
                const d = DATA[`${c}${r}`];
                return (
                  <Cell
                    key={c}
                    $right={boxed(r, i) || boxed(r, i + 1)}
                    $bottom={boxed(r, i) || boxed(r + 1, i)}
                    $fill={r === 3 && boxed(r, i)}
                    $align={d?.align ?? 'flex-start'}
                    $pr={d?.pr ?? 2}
                  >
                    {d?.t}
                  </Cell>
                );
              })}
            </React.Fragment>
          ))}
          <Selection><Handle /></Selection>
          <ArrowMark><Arrow /></ArrowMark>
          <Note>utiliser le signe + en bas à droite de la cellule</Note>
        </Sheet>
        <VScroll>
          <ScrollBtn><UpDown $up /></ScrollBtn>
          <VThumb />
          <VTrack />
          <ScrollBtn><UpDown /></ScrollBtn>
        </VScroll>
      </SheetArea>

      <TabsRow>
        <NavTriangle $dir="l" $ml={27} />
        <NavTriangle $dir="r" $ml={25} />
        <TabRule />
        <SheetTab>Feuil1</SheetTab>
        <SheetTab $on>Feuil2</SheetTab>
        <AddSheet><AddCircle /></AddSheet>
        <HScroll>
          <HBtn><BtnTriangle $dir="l" /></HBtn>
          <HThumb />
          <HTrack />
          <HBtn><BtnTriangle $dir="r" /></HBtn>
        </HScroll>
      </TabsRow>

      <StatusBar>
        Prêt
        <Spacer />
        <ViewBtn $on><NormalView /></ViewBtn>
        <ViewBtn><PageView /></ViewBtn>
        <ViewBtn><BreakView /></ViewBtn>
        <Slot $w={7} $ml={4}><ZoomMinus /></Slot>
        <ZoomSlider><ZoomThumb /></ZoomSlider>
        <Slot $w={9} $ml={4}><ZoomPlus /></Slot>
        <ZoomPct>100 %</ZoomPct>
      </StatusBar>
    </Window>
  );
}
